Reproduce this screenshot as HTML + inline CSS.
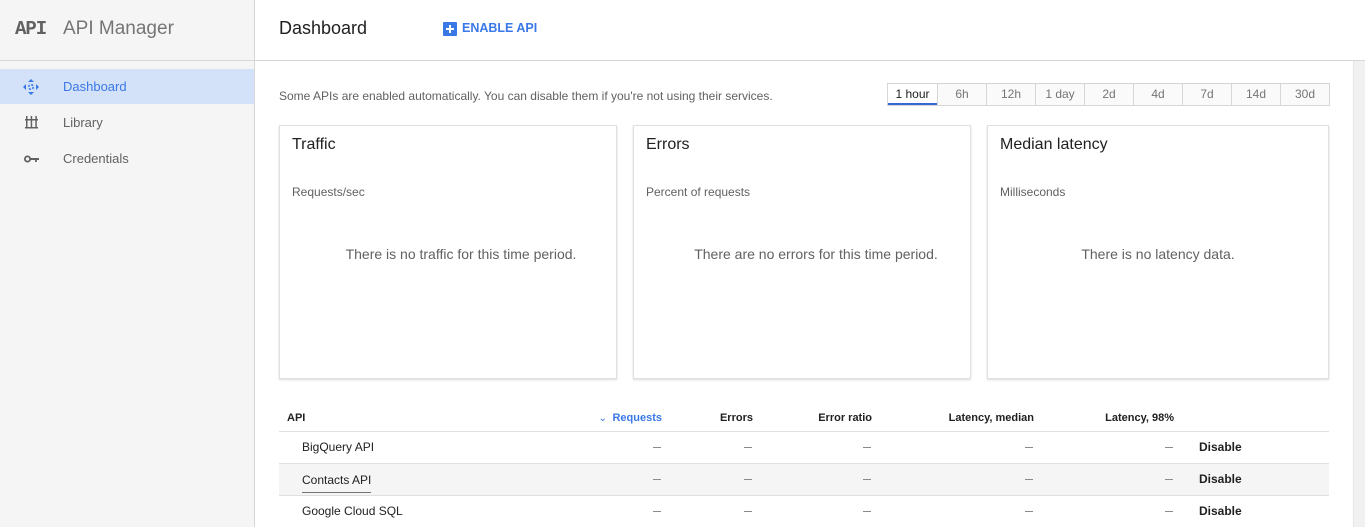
<!DOCTYPE html>
<html><head><style>
*{margin:0;padding:0;box-sizing:border-box}
body{width:1365px;height:527px;overflow:hidden;font-family:"Liberation Sans",sans-serif;background:#fff;position:relative;color:#212121}
.side{position:absolute;left:0;top:0;width:255px;height:527px;background:#f5f5f5;border-right:1px solid #d6d6d6}
.abs{position:absolute;white-space:nowrap}
.hdrline{position:absolute;left:0;top:60px;width:1365px;height:1px;background:#d6d6d6}
.nav{position:absolute;left:0;width:254px;height:35px;font-size:13px;color:#616161;line-height:35px;padding-left:63px}
.card{position:absolute;top:125px;width:338px;height:254px;border:1px solid #e0e0e0;box-shadow:0 1px 2px rgba(0,0,0,.15);background:#fff}
.card .t{position:absolute;left:12px;top:10px;font-size:16px;color:#212121}
.card .s{position:absolute;left:12px;top:59px;font-size:12px;color:#616161}
.card .m{position:absolute;left:0;right:0;top:120px;text-align:center;font-size:14px;color:#616161}
.tabs{position:absolute;left:887px;top:83px;height:23px;display:flex;border:1px solid #d6d6d6;background:#fafafa}
.tabs div{width:49px;text-align:center;font-size:12px;line-height:21px;color:#757575;border-left:1px solid #d6d6d6}
.tabs div:first-child{border-left:none;color:#212121;border-bottom:2px solid #3367d6;background:#fff}
.row{position:absolute;left:279px;width:1050px;height:32px;border-top:1px solid #e0e0e0;font-size:12px;line-height:31px}
.th{position:absolute;top:412px;font-size:11px;font-weight:bold;color:#212121}
.d{position:absolute;width:8px;height:1px;background:#8a8a8a}
.dis{position:absolute;left:1199px;font-size:12px;font-weight:bold;color:#212121}
</style></head><body>
<div class="side"></div>
<div class="hdrline"></div>
<div class="abs" style="left:15px;top:18px;font-family:'Liberation Mono',monospace;font-weight:bold;font-size:19px;color:#616161;letter-spacing:-1px">API</div>
<div class="abs" style="left:63px;top:18px;font-size:19px;color:#757575">API Manager</div>
<div class="nav" style="top:69px;background:#d3e2f8;color:#3b78e7">Dashboard</div>
<svg class="abs" style="left:23px;top:79px" width="16" height="16" viewBox="0 0 16 16" fill="#3b78e7"><path d="M8 0l3 3H5zM8 16l-3-3h6zM0 8l3-3v6zM16 8l-3 3V5z"/><circle cx="8" cy="8" r="2.3" fill="none" stroke="#3b78e7" stroke-width="1.6" stroke-dasharray="2 1.6"/></svg>
<div class="nav" style="top:105px">Library</div>
<svg class="abs" style="left:25px;top:116px" width="13" height="14" viewBox="0 0 13 14" fill="#616161"><rect x="0" y="3" width="13" height="1.5"/><rect x="0" y="11" width="13" height="1.5"/><rect x="1" y="0" width="1.5" height="3"/><rect x="5.7" y="0" width="1.5" height="3"/><rect x="10.3" y="0" width="1.5" height="3"/><rect x="1" y="4" width="1.5" height="7"/><rect x="5.7" y="4" width="1.5" height="7"/><rect x="10.3" y="4" width="1.5" height="7"/></svg>
<div class="nav" style="top:141px">Credentials</div>
<svg class="abs" style="left:24px;top:155px" width="15" height="8" viewBox="0 0 15 8" fill="#616161"><circle cx="3.5" cy="4" r="2.6" fill="none" stroke="#616161" stroke-width="1.8"/><rect x="6" y="3" width="9" height="2"/><rect x="11" y="3" width="1.8" height="4"/></svg>
<div class="abs" style="left:279px;top:18px;font-size:18px;color:#212121">Dashboard</div>
<div class="abs" style="left:443px;top:22px;width:14px;height:14px;background:#3b78e7;border-radius:1px"><div style="position:absolute;left:3px;top:6px;width:8px;height:2px;background:#fff"></div><div style="position:absolute;left:6px;top:3px;width:2px;height:8px;background:#fff"></div></div>
<div class="abs" style="left:462px;top:21px;font-size:12.5px;font-weight:bold;color:#3b78e7">ENABLE API</div>
<div class="abs" style="left:279px;top:89px;font-size:12px;color:#616161">Some APIs are enabled automatically. You can disable them if you're not using their services.</div>
<div class="tabs"><div>1 hour</div><div>6h</div><div>12h</div><div>1 day</div><div>2d</div><div>4d</div><div>7d</div><div>14d</div><div>30d</div></div>
<div class="abs" style="left:1353px;top:61px;width:12px;height:466px;background:#f1f1f1;border-left:1px solid #e6e6e6"></div>
<div class="card" style="left:279px"><div class="t">Traffic</div><div class="s">Requests/sec</div><div class="m" style="padding-left:26px">There is no traffic for this time period.</div></div>
<div class="card" style="left:633px"><div class="t">Errors</div><div class="s">Percent of requests</div><div class="m" style="padding-left:28px">There are no errors for this time period.</div></div>
<div class="card" style="left:987px;width:342px"><div class="t">Median latency</div><div class="s">Milliseconds</div><div class="m">There is no latency data.</div></div>
<div class="th" style="left:287px">API</div>
<div class="th" style="right:703px;color:#3b78e7"><span style="font-weight:normal;font-size:10px">&#8964;&nbsp;&nbsp;</span>Requests</div>
<div class="th" style="right:612px">Errors</div>
<div class="th" style="right:493px">Error ratio</div>
<div class="th" style="right:331px">Latency, median</div>
<div class="th" style="right:191px">Latency, 98%</div>
<div class="row" style="top:431px"><span class="abs" style="left:23px">BigQuery API</span></div>
<div class="row" style="top:463px;background:#f5f5f5"><span class="abs" style="left:23px;line-height:24px;top:4px;border-bottom:1px solid #757575">Contacts API</span></div>
<div class="row" style="top:495px"><span class="abs" style="left:23px">Google Cloud SQL</span></div>
<div class="d" style="left:653px;top:447px"></div><div class="d" style="left:744px;top:447px"></div><div class="d" style="left:863px;top:447px"></div><div class="d" style="left:1025px;top:447px"></div><div class="d" style="left:1165px;top:447px"></div><div class="dis" style="top:440px">Disable</div>
<div class="d" style="left:653px;top:479px"></div><div class="d" style="left:744px;top:479px"></div><div class="d" style="left:863px;top:479px"></div><div class="d" style="left:1025px;top:479px"></div><div class="d" style="left:1165px;top:479px"></div><div class="dis" style="top:472px">Disable</div>
<div class="d" style="left:653px;top:511px"></div><div class="d" style="left:744px;top:511px"></div><div class="d" style="left:863px;top:511px"></div><div class="d" style="left:1025px;top:511px"></div><div class="d" style="left:1165px;top:511px"></div><div class="dis" style="top:504px">Disable</div>
</body></html>
